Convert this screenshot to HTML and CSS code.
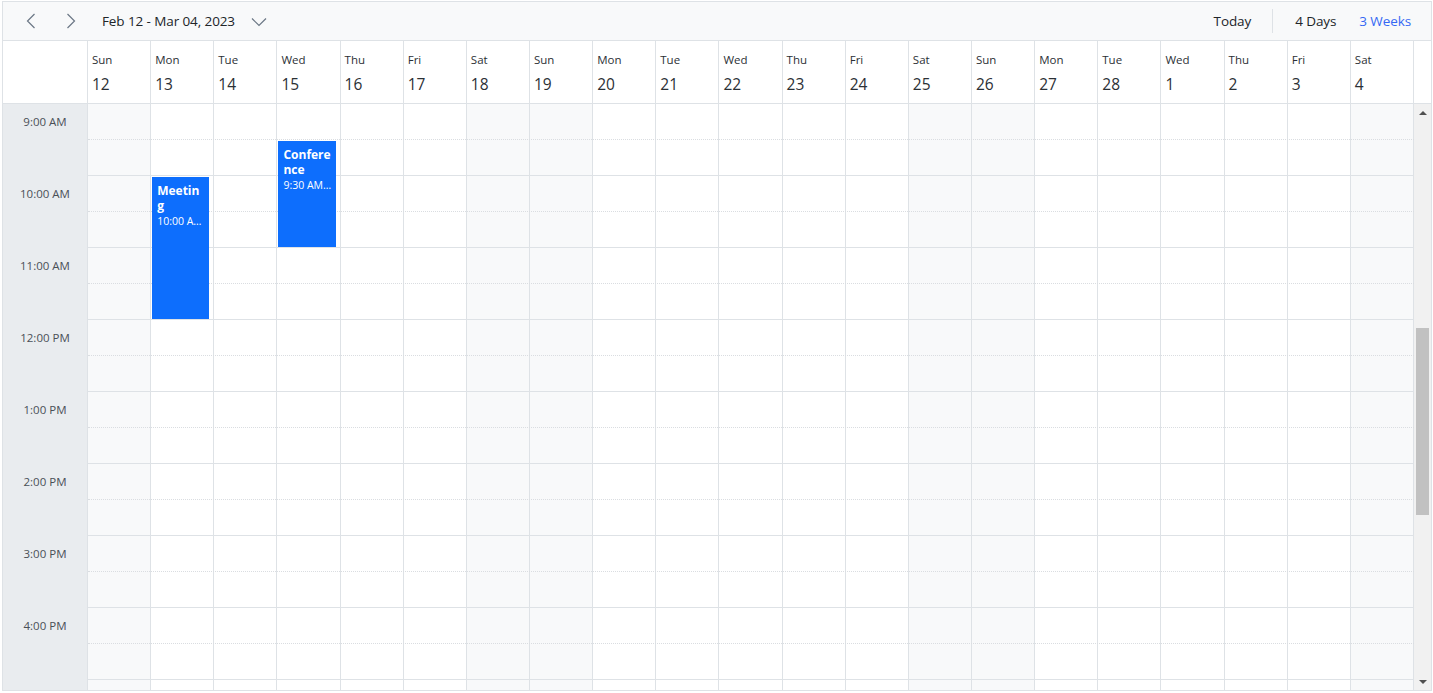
FILE: index.html
```html
<!DOCTYPE html>
<html lang="en">
<head>
<meta charset="utf-8">
<title>Scheduler</title>
<link rel="stylesheet" href="styles.css">
</head>
<body>
<div class="scheduler">
  <div class="toolbar">
    <div class="tb-left">
      <button class="nav-btn prev" aria-label="Previous">
        <svg width="10" height="16" viewBox="0 0 10 16"><path d="M8.5 1 L1.5 8 L8.5 15" fill="none" stroke="#6b7785" stroke-width="1.2"/></svg>
      </button>
      <button class="nav-btn" aria-label="Next">
        <svg width="10" height="16" viewBox="0 0 10 16"><path d="M1.5 1 L8.5 8 L1.5 15" fill="none" stroke="#6b7785" stroke-width="1.2"/></svg>
      </button>
      <div class="range">Feb 12 - Mar 04, 2023</div>
      <svg class="caret" width="16" height="10" viewBox="0 0 16 10"><path d="M1 1.5 L8 8.5 L15 1.5" fill="none" stroke="#6b7785" stroke-width="1.2"/></svg>
    </div>
    <div class="tb-right">
      <span class="tb-item">Today</span>
      <span class="tb-sep"></span>
      <span class="tb-item">4 Days</span>
      <span class="tb-item active">3 Weeks</span>
    </div>
  </div>

  <div class="header">
    <div class="corner"></div>
    <div class="days-head">
      <div class="dh"><span class="dn">Sun</span><span class="dd">12</span></div>
      <div class="dh"><span class="dn">Mon</span><span class="dd">13</span></div>
      <div class="dh"><span class="dn">Tue</span><span class="dd">14</span></div>
      <div class="dh"><span class="dn">Wed</span><span class="dd">15</span></div>
      <div class="dh"><span class="dn">Thu</span><span class="dd">16</span></div>
      <div class="dh"><span class="dn">Fri</span><span class="dd">17</span></div>
      <div class="dh"><span class="dn">Sat</span><span class="dd">18</span></div>
      <div class="dh"><span class="dn">Sun</span><span class="dd">19</span></div>
      <div class="dh"><span class="dn">Mon</span><span class="dd">20</span></div>
      <div class="dh"><span class="dn">Tue</span><span class="dd">21</span></div>
      <div class="dh"><span class="dn">Wed</span><span class="dd">22</span></div>
      <div class="dh"><span class="dn">Thu</span><span class="dd">23</span></div>
      <div class="dh"><span class="dn">Fri</span><span class="dd">24</span></div>
      <div class="dh"><span class="dn">Sat</span><span class="dd">25</span></div>
      <div class="dh"><span class="dn">Sun</span><span class="dd">26</span></div>
      <div class="dh"><span class="dn">Mon</span><span class="dd">27</span></div>
      <div class="dh"><span class="dn">Tue</span><span class="dd">28</span></div>
      <div class="dh"><span class="dn">Wed</span><span class="dd">1</span></div>
      <div class="dh"><span class="dn">Thu</span><span class="dd">2</span></div>
      <div class="dh"><span class="dn">Fri</span><span class="dd">3</span></div>
      <div class="dh"><span class="dn">Sat</span><span class="dd">4</span></div>
    </div>
    <div class="head-gap"></div>
  </div>

  <div class="body">
    <div class="gutter">
      <div class="tl"><span>9:00 AM</span></div>
      <div class="tl"><span>10:00 AM</span></div>
      <div class="tl"><span>11:00 AM</span></div>
      <div class="tl"><span>12:00 PM</span></div>
      <div class="tl"><span>1:00 PM</span></div>
      <div class="tl"><span>2:00 PM</span></div>
      <div class="tl"><span>3:00 PM</span></div>
      <div class="tl"><span>4:00 PM</span></div>
    </div>
    <div class="grid">
      <div class="col c1 we"></div>
      <div class="col c2"></div>
      <div class="col c3"></div>
      <div class="col c4"></div>
      <div class="col c5"></div>
      <div class="col c6"></div>
      <div class="col c7 we"></div>
      <div class="col c8 we"></div>
      <div class="col c9"></div>
      <div class="col c10"></div>
      <div class="col c11"></div>
      <div class="col c12"></div>
      <div class="col c13"></div>
      <div class="col c14 we"></div>
      <div class="col c15 we"></div>
      <div class="col c16"></div>
      <div class="col c17"></div>
      <div class="col c18"></div>
      <div class="col c19"></div>
      <div class="col c20"></div>
      <div class="col c21 we"></div>

      <div class="line r1 half"></div>
      <div class="line r2 hour"></div>
      <div class="line r3 half"></div>
      <div class="line r4 hour"></div>
      <div class="line r5 half"></div>
      <div class="line r6 hour"></div>
      <div class="line r7 half"></div>
      <div class="line r8 hour"></div>
      <div class="line r9 half"></div>
      <div class="line r10 hour"></div>
      <div class="line r11 half"></div>
      <div class="line r12 hour"></div>
      <div class="line r13 half"></div>
      <div class="line r14 hour"></div>
      <div class="line r15 half"></div>
      <div class="line r16 hour"></div>
      <div class="line r17 half"></div>
      <div class="line r18 hour"></div>

      <div class="event ev-meeting">
        <div class="ev-title">Meeting</div>
        <div class="ev-time">10:00 AM - 12:00 PM</div>
      </div>
      <div class="event ev-conf">
        <div class="ev-title">Conference</div>
        <div class="ev-time">9:30 AM - 11:00 AM</div>
      </div>
    </div>
    <div class="vscroll">
      <div class="sb-arrow"><span class="tri-up"></span></div>
      <div class="sb-track"><div class="sb-thumb"></div></div>
      <div class="sb-arrow"><span class="tri-down"></span></div>
    </div>
  </div>
</div>
</body>
</html>
```

FILE: styles.css
```css
* { box-sizing: border-box; }

html, body {
  margin: 0;
  padding: 0;
  background: #ffffff;
}

body {
  font-family: "Open Sans", "Noto Sans", "Liberation Sans", sans-serif;
  color: #212529;
}

.scheduler {
  margin: 1px 0 0 2px;
  width: 1430px;
  height: 690px;
  border: 1px solid #dee2e6;
  display: flex;
  flex-direction: column;
  overflow: hidden;
}

/* Toolbar */
.toolbar {
  height: 39px;
  flex: 0 0 39px;
  background: #f8f9fa;
  border-bottom: 1px solid #dee2e6;
  display: flex;
  align-items: center;
  justify-content: space-between;
}

.tb-left {
  display: flex;
  align-items: center;
  padding-left: 18px;
}

.nav-btn {
  background: none;
  border: 0;
  padding: 0;
  width: 20px;
  height: 24px;
  display: flex;
  align-items: center;
  justify-content: center;
  margin-right: 18px;
}

.nav-btn.prev { margin-right: 20px; }

.range {
  font-size: 13.5px;
  margin-left: 3px;
  color: #212529;
  letter-spacing: -0.1px;
}

.caret {
  margin-left: 16px;
  margin-top: 2px;
}

.tb-right {
  display: flex;
  align-items: center;
  padding-right: 20px;
  font-size: 13.5px;
}

.tb-item {
  color: #212529;
  letter-spacing: -0.1px;
}

.tb-item.active {
  color: #3568f4;
  margin-left: 23px;
}

.tb-sep {
  width: 1px;
  height: 24px;
  background: #dee2e6;
  margin: 0 22px 0 21px;
}

/* Header */
.header {
  height: 63px;
  flex: 0 0 63px;
  display: flex;
  border-bottom: 1px solid #dee2e6;
}

.corner {
  width: 85px;
  flex: 0 0 85px;
  border-right: 1px solid #dee2e6;
}

.days-head {
  width: 1326px;
  flex: 0 0 1326px;
  display: grid;
  grid-template-columns: repeat(21, 1fr);
}

.dh {
  border-right: 1px solid #dee2e6;
  display: flex;
  flex-direction: column;
  padding: 11px 0 0 4px;
}

.dn {
  font-size: 11.5px;
  line-height: 16px;
  color: #2b3035;
}

.dd {
  font-size: 15.5px;
  line-height: 20px;
  margin-top: 6px;
  color: #2b3035;
}

.head-gap {
  flex: 1;
}

/* Body */
.body {
  flex: 1;
  display: flex;
  overflow: hidden;
  min-height: 0;
}

.gutter {
  width: 85px;
  flex: 0 0 85px;
  background: #e9ecef;
  border-right: 1px solid #dee2e6;
  display: flex;
  flex-direction: column;
}

.tl {
  height: 72px;
  flex: 0 0 72px;
}

.tl span {
  display: flex;
  height: 36px;
  padding-bottom: 2px;
  align-items: center;
  justify-content: center;
  font-size: 11.5px;
  color: #495057;
}

.grid {
  width: 1326px;
  flex: 0 0 1326px;
  display: grid;
  grid-template-columns: repeat(21, 1fr);
  grid-template-rows: repeat(18, 36px);
  align-self: flex-start;
}

.col {
  grid-row: 1 / -1;
  border-right: 1px solid #dee2e6;
  background: #ffffff;
}

.col.we { background: #f8f9fa; }

.c1 { grid-column: 1; } .c2 { grid-column: 2; } .c3 { grid-column: 3; }
.c4 { grid-column: 4; } .c5 { grid-column: 5; } .c6 { grid-column: 6; }
.c7 { grid-column: 7; } .c8 { grid-column: 8; } .c9 { grid-column: 9; }
.c10 { grid-column: 10; } .c11 { grid-column: 11; } .c12 { grid-column: 12; }
.c13 { grid-column: 13; } .c14 { grid-column: 14; } .c15 { grid-column: 15; }
.c16 { grid-column: 16; } .c17 { grid-column: 17; } .c18 { grid-column: 18; }
.c19 { grid-column: 19; } .c20 { grid-column: 20; } .c21 { grid-column: 21; }

.line {
  grid-column: 1 / -1;
}

.line.half { border-bottom: 1px dotted #dadde1; }
.line.hour { border-bottom: 1px solid #dee2e6; }

.r1 { grid-row: 1; } .r2 { grid-row: 2; } .r3 { grid-row: 3; }
.r4 { grid-row: 4; } .r5 { grid-row: 5; } .r6 { grid-row: 6; }
.r7 { grid-row: 7; } .r8 { grid-row: 8; } .r9 { grid-row: 9; }
.r10 { grid-row: 10; } .r11 { grid-row: 11; } .r12 { grid-row: 12; }
.r13 { grid-row: 13; } .r14 { grid-row: 14; } .r15 { grid-row: 15; }
.r16 { grid-row: 16; } .r17 { grid-row: 17; } .r18 { grid-row: 18; }

.event {
  background: #0d6efd;
  color: #ffffff;
  margin: 1px 5px 0 1px;
  padding: 6px 4px 0 5px;
  overflow: hidden;
}

.ev-meeting { grid-column: 2; grid-row: 3 / 7; margin-bottom: 1px; }
.ev-conf { grid-column: 4; grid-row: 2 / 5; margin-bottom: 1px; }

.ev-title {
  font-size: 12px;
  font-weight: 700;
  line-height: 15px;
  word-break: break-all;
}

.ev-time {
  font-size: 10.5px;
  line-height: 17px;
  white-space: nowrap;
  overflow: hidden;
  text-overflow: ellipsis;
}

/* Scrollbar */
.vscroll {
  width: 17px;
  flex: 0 0 17px;
  background: #f1f1f1;
  display: flex;
  flex-direction: column;
}

.sb-arrow {
  height: 17px;
  flex: 0 0 17px;
  display: flex;
  align-items: center;
  justify-content: center;
}

.tri-up {
  width: 0;
  height: 0;
  border-left: 4px solid transparent;
  border-right: 4px solid transparent;
  border-bottom: 4px solid #505050;
}

.tri-down {
  width: 0;
  height: 0;
  border-left: 4px solid transparent;
  border-right: 4px solid transparent;
  border-top: 4px solid #505050;
}

.sb-track {
  flex: 1;
  padding: 207px 2px 0 2px;
}

.sb-thumb {
  height: 187px;
  background: #c1c1c1;
}
```
